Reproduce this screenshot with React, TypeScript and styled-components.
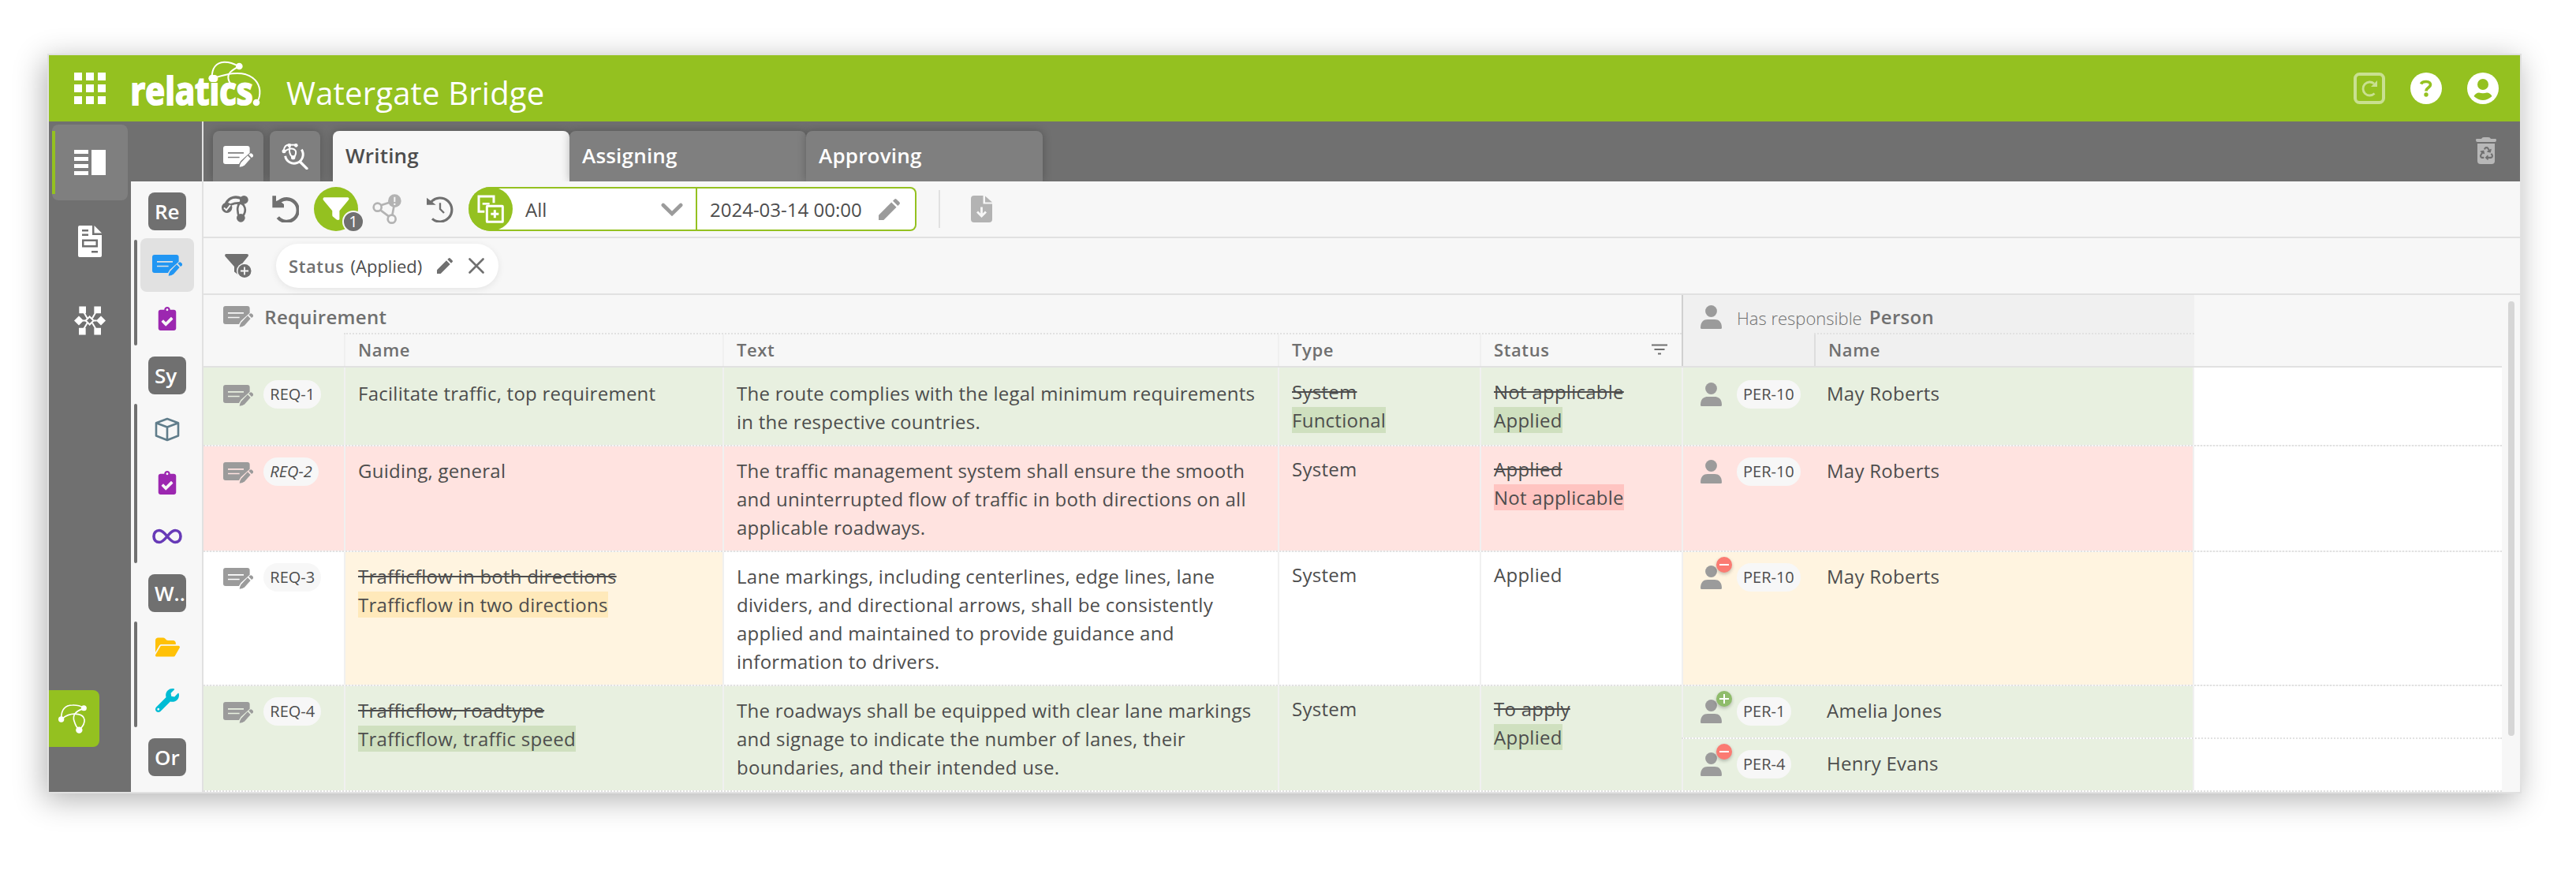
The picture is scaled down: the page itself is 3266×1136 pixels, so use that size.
import React from "react";
import styled, { createGlobalStyle, css } from "styled-components";
import { FaClipboardCheck, FaWrench } from "react-icons/fa";
import { FaFolderOpen } from "react-icons/fa6";
import { FaRecycle } from "react-icons/fa";

const green = "#94c120";
const dark = "#707070";
const ink = "#4d4d4d";
const line = "#e1e1e1";
const soft = "#f7f7f7";

const GlobalStyle = createGlobalStyle`
  * { box-sizing: border-box; }
  body {
    margin: 0;
    background: #fff;
    color: ${ink};
    font-family: "Open Sans", "Noto Sans", sans-serif;
    font-size: 24px;
  }
  svg { display: block; flex: none; }
`;

const Page = styled.div`
  height: 1136px;
  padding: 68px 69px 130px 60px;
`;

const Window = styled.div`
  width: 3137px;
  height: 938px;
  border: 2px solid ${line};
  box-shadow: -4px 8px 36px rgba(0, 0, 0, 0.3);
  display: flex;
  flex-direction: column;
  background: ${soft};
`;

/* ---------- header ---------- */

const Header = styled.header`
  height: 84px;
  flex: none;
  background: ${green};
  display: flex;
  align-items: center;
  padding: 0 27px 0 32px;
  color: #fff;
`;

const Brand = styled.div`
  margin-left: 31px;
`;

const Title = styled.h1`
  margin: 0 auto 0 28px;
  padding-top: 12px;
  font-size: 40px;
  line-height: 56px;
  font-weight: 400;
  letter-spacing: 0.2px;
`;

const HeaderActions = styled.div`
  display: flex;
  gap: 32px;
`;

/* ---------- shell ---------- */

const Body = styled.div`
  flex: 1;
  min-height: 0;
  display: flex;
`;

const Rail = styled.nav`
  width: 104px;
  background: ${dark};
  display: flex;
  flex-direction: column;
  padding: 4px 0 57px 0;
`;

const RailItem = styled.div<{ $active?: boolean }>`
  width: 96px;
  height: 96px;
  margin: 0 0 4px 4px;
  border-radius: 8px;
  display: flex;
  align-items: center;
  color: #fff;
  background: ${(p) => (p.$active ? "#7f7f7f" : "transparent")};
`;

const RailMark = styled.div<{ $active?: boolean }>`
  width: 4px;
  height: 80px;
  margin-right: 24px;
  background: ${(p) => (p.$active ? green : "transparent")};
`;

const RailButton = styled.div`
  width: 64px;
  height: 72px;
  margin-top: auto;
  border-radius: 0 8px 8px 0;
  background: ${green};
  display: flex;
  align-items: center;
  padding-left: 12px;
`;

const SubRail = styled.nav`
  width: 90px;
  display: flex;
  flex-direction: column;
`;

const SubRailCap = styled.div`
  height: 76px;
  background: ${dark};
`;

const GroupChip = styled.div`
  width: 48px;
  height: 48px;
  margin: 14px 0 10px 22px;
  padding: 0 0 1px 8px;
  border-radius: 8px;
  background: ${dark};
  color: #fff;
  font-size: 26px;
  font-weight: 600;
  line-height: 48px;
  overflow: hidden;
  white-space: nowrap;
`;

const Group = styled.div`
  display: flex;
  padding-left: 4px;
`;

const GroupBar = styled.div`
  width: 4px;
  margin: 2px 4px 0 0;
  border-radius: 2px;
  background: ${dark};
`;

const GroupItem = styled.div<{ $color: string; $active?: boolean }>`
  width: 68px;
  height: 68px;
  border-radius: 8px;
  display: flex;
  align-items: center;
  justify-content: center;
  color: ${(p) => p.$color};
  background: ${(p) => (p.$active ? "#e1e1e1" : "transparent")};
`;

const Main = styled.main`
  flex: 1;
  min-width: 0;
  border-left: 2px solid ${line};
  display: flex;
  flex-direction: column;
`;

/* ---------- tabs ---------- */

const TabBar = styled.div`
  height: 76px;
  background: ${dark};
  display: flex;
  align-items: flex-end;
  padding: 0 30px 0 12px;
  overflow: hidden;
`;

const tabBase = css`
  height: 64px;
  border-radius: 8px 8px 0 0;
  display: flex;
  align-items: center;
  box-shadow: 0 0 12px rgba(0, 0, 0, 0.25);
  color: #fff;
  background: #7f7f7f;
`;

const IconTab = styled.div`
  ${tabBase}
  width: 64px;
  margin-right: 8px;
  justify-content: center;
`;

const Tab = styled.div<{ $active?: boolean }>`
  ${tabBase}
  width: 300px;
  padding: 0 16px 3px;
  font-size: 26px;
  font-weight: 600;
  letter-spacing: 0.2px;
  ${(p) =>
    p.$active &&
    css`
      margin-left: 8px;
      color: ${ink};
      background: ${soft};
    `}
`;

const TabTrash = styled.div`
  margin-left: auto;
  height: 56px;
  color: #b7b7b7;
`;

/* ---------- toolbars ---------- */

const Toolbar = styled.div`
  height: 72px;
  flex: none;
  border-bottom: 2px solid ${line};
  display: flex;
  align-items: center;
  padding-left: 8px;
  color: ${dark};
`;

const Tool = styled.div<{ $muted?: boolean; $shift?: number }>`
  width: 64px;
  height: 56px;
  margin-left: ${(p) => p.$shift ?? 0}px;
  display: flex;
  align-items: center;
  justify-content: center;
  color: ${(p) => (p.$muted ? "#b3b3b3" : dark)};
`;

const RoundTool = styled.div<{ $left?: number }>`
  position: relative;
  width: 56px;
  height: 56px;
  margin-left: ${(p) => p.$left ?? 0}px;
  flex: none;
  border-radius: 50%;
  background: ${green};
  color: #fff;
  display: flex;
  align-items: center;
  justify-content: center;
`;

const CountBadge = styled.span`
  position: absolute;
  right: -8px;
  bottom: -2px;
  width: 28px;
  height: 28px;
  border-radius: 50%;
  border: 2px solid ${soft};
  background: ${dark};
  color: #fff;
  font-size: 20px;
  line-height: 24px;
  text-align: center;
`;

const Combo = styled.div`
  width: 568px;
  height: 56px;
  margin-left: 4px;
  display: flex;
  border: 2px solid ${green};
  border-left: 0;
  border-radius: 28px 8px 8px 28px;
  background: #fff;
  color: ${ink};
  align-items: center;
`;

const ComboSelect = styled.div`
  flex: 1;
  display: flex;
  align-items: center;
  justify-content: space-between;
  padding: 0 16px 0 16px;
`;

const ComboDate = styled.div`
  width: 278px;
  height: 52px;
  border-left: 2px solid ${green};
  display: flex;
  align-items: center;
  justify-content: space-between;
  padding: 0 19px 0 16px;
`;

const Gray = styled.span`
  color: #9b9b9b;
`;

const Divider = styled.div`
  width: 2px;
  height: 48px;
  margin: 0 20px 0 28px;
  background: ${line};
`;

const FilterChip = styled.div`
  width: 282px;
  height: 56px;
  margin-left: 16px;
  padding: 0 18px 0 16px;
  border-radius: 28px;
  background: #fff;
  box-shadow: 0 2px 10px rgba(0, 0, 0, 0.08);
  display: flex;
  align-items: center;
  font-size: 22px;
  color: ${dark};
`;

const ChipField = styled.b`
  font-weight: 600;
  letter-spacing: 0.6px;
  margin-right: 8px;
`;

const ChipValue = styled.span`
  color: ${ink};
  margin-right: auto;
`;

const ChipActions = styled.span`
  display: flex;
  gap: 20px;
`;

/* ---------- table ---------- */

const TableArea = styled.div`
  flex: 1;
  min-height: 0;
  display: flex;
`;

const Table = styled.div`
  width: 2914px;
  display: flex;
  flex-direction: column;
`;

const HeadRow = styled.div`
  height: 92px;
  flex: none;
  display: flex;
  border-bottom: 2px solid ${line};
  color: ${dark};
  font-weight: 600;
`;

const HeadGroup = styled.div<{ $width: number; $alt?: boolean }>`
  width: ${(p) => p.$width}px;
  display: flex;
  flex-direction: column;
  ${(p) =>
    p.$alt &&
    css`
      background: #f0f0f0;
      border-left: 2px solid #d0d0d0;
    `}
`;

const HeadTitle = styled.div<{ $gap: number; $left: number }>`
  height: 48px;
  display: flex;
  align-items: center;
  gap: ${(p) => p.$gap}px;
  padding-left: ${(p) => p.$left}px;
  font-size: 24px;
  letter-spacing: 0.3px;
  padding-top: 7px;
`;

const HeadLight = styled.span`
  font-size: 22px;
  font-weight: 300;
  letter-spacing: 0;
  margin-right: -10px;
  padding-top: 2px;
`;

const HeadCells = styled.div<{ $indent: number }>`
  height: 42px;
  display: flex;
  margin-left: ${(p) => p.$indent}px;
  border-top: 2px dotted ${line};
`;

const HeadCell = styled.div<{ $width: number; $alt?: boolean }>`
  width: ${(p) => p.$width}px;
  border-left: 2px solid ${(p) => (p.$alt ? "#dddddd" : "#f0f0f0")};
  padding: 0 18px 2px 16px;
  display: flex;
  align-items: center;
  justify-content: space-between;
  font-size: 22px;
  letter-spacing: 0.6px;
`;

type Tone = "add" | "remove" | "change" | "none";

const toneBg: Record<Tone, string> = {
  add: "#e8f0e0",
  remove: "#ffe3e0",
  change: "#fff4e0",
  none: "#ffffff",
};
const toneMark: Record<Tone, string> = {
  add: "#cfe0bf",
  remove: "#ffc4c1",
  change: "#ffe9ba",
  none: "transparent",
};

const Row = styled.div<{ $first?: boolean }>`
  display: flex;
  background: #fff;
  ${(p) =>
    p.$first
      ? css`
          --top: 2px;
        `
      : css`
          border-top: 2px dotted ${line};
          background-clip: padding-box;
        `}
`;

const Cell = styled.div<{ $width: number; $tone: Tone; $up?: boolean; $first?: boolean }>`
  width: ${(p) => p.$width}px;
  flex: none;
  padding: calc(${(p) => (p.$up ? 11 : 13)}px + var(--top, 0px)) 0 ${(p) => (p.$up ? 13 : 11)}px 16px;
  border-left: ${(p) => (p.$first ? 0 : 2)}px solid #f0f0f0;
  background: ${(p) => toneBg[p.$tone]};
  line-height: 36px;
  letter-spacing: 0.26px;
  white-space: pre-line;
`;

const KeyCell = styled.div<{ $width: number; $tone: Tone; $left: number; $gap: number; $line?: boolean }>`
  width: ${(p) => p.$width}px;
  flex: none;
  display: flex;
  align-items: flex-start;
  gap: ${(p) => p.$gap}px;
  padding: calc(14px + var(--top, 0px)) 0 0 ${(p) => p.$left}px;
  border-left: ${(p) => (p.$line ? 2 : 0)}px solid #f0f0f0;
  background: ${(p) => toneBg[p.$tone]};
`;

const KeyIcon = styled.div<{ $top: number }>`
  position: relative;
  padding-top: ${(p) => p.$top}px;
  color: #9b9b9b;
`;

const ChangeBadge = styled.span<{ $kind: "add" | "remove" }>`
  position: absolute;
  left: 20px;
  top: -8px;
  width: 20px;
  height: 20px;
  border-radius: 50%;
  background: ${(p) => (p.$kind === "add" ? "#8fbc6b" : "#fb7b72")};
  box-shadow: 0 2px 4px rgba(0, 0, 0, 0.25);
  display: flex;
  align-items: center;
  justify-content: center;
`;

const Pill = styled.span<{ $italic?: boolean }>`
  height: 36px;
  padding: 0 8px;
  border-radius: 18px;
  background: ${soft};
  font-size: 20px;
  line-height: 35px;
  font-style: ${(p) => (p.$italic ? "italic" : "normal")};
`;

const Old = styled.s`
  text-decoration-thickness: 2px;
`;

const Mark = styled.span<{ $tone: Tone }>`
  background: ${(p) => toneMark[p.$tone]};
`;

const People = styled.div`
  flex: 1;
  display: flex;
  flex-direction: column;
`;

const PersonRow = styled.div`
  flex: 1;
  display: flex;
  & + & {
    border-top: 2px dotted ${line};
  }
`;

const Filler = styled.div`
  flex: 1;
  border-left: 2px solid #f0f0f0;
`;

const LastLine = styled.div`
  height: 2px;
  background: #fff;
  border-top: 2px dotted ${line};
`;

const ScrollTrack = styled.div`
  flex: 1;
  padding: 8px 0 0 8px;
`;

const ScrollThumb = styled.div`
  width: 8px;
  height: 551px;
  border-radius: 4px;
  background: #d6d6d6;
`;

/* ---------- drawings ---------- */

const LogoSvg = styled.svg`
  overflow: visible;
`;

const NoteIcon = () => (
  <svg width="38.3" height="27" viewBox="0 0 115 81" fill="currentColor">
    <path
      fillRule="evenodd"
      d="M9 0H92a9 9 0 0 1 9 9V26L67 57L60 69H9a9 9 0 0 1-9-9V9a9 9 0 0 1 9-9ZM18 24v5H78v-5ZM18 41v5H62v-5Z"
    />
    <path d="M93 37L104 48L82 73Q75 80 62 80Q63 71 68 63Z" />
    <path d="M97 33l5-4q4-3 8 1l3 3q3 4 0 8l-5 4Z" />
  </svg>
);

const PersonIcon = () => (
  <svg width="27" height="30" viewBox="0 0 27 30" fill="currentColor">
    <circle cx="13.5" cy="7.5" r="7.4" />
    <path d="M0 28.5C0 21 4 18 9 18h9c5 0 9 3 9 10.500q0 1.500-1.500 1.500H1.500Q0 30 0 28.500Z" />
  </svg>
);

const PencilIcon = ({ size }: { size: number }) => (
  <svg width={size} height={size} viewBox="0 0 60 60" fill="currentColor">
    <path d="M0 60V46L36 10L50 24L14 60Z" />
    <path d="M40 6L45 1q3-2 6 1l7 7q3 3 1 6l-5 5Z" />
  </svg>
);

const Logo = () => (
  <LogoSvg width="170" height="84" viewBox="45 12 510 252" fill="none" stroke="#fff">
    <text
      x="46"
      y="201"
      fill="#fff"
      strokeWidth="6"
      fontFamily="Open Sans, sans-serif"
      fontWeight="700"
      fontSize="144"
      textLength="466"
      lengthAdjust="spacingAndGlyphs"
    >
      relatics
    </text>
    <g strokeWidth="6">
      <path d="M356 96C356 62 372 40 402 38C425 37 440 44 458 54" />
      <path d="M360 99C410 86 445 74 485 85C525 98 540 128 538 158C537 175 532 185 526 192" />
      <path d="M458 56C435 66 417 78 418 97C418 108 424 118 432 128" />
    </g>
    <g fill="#fff" stroke="none">
      <circle cx="357" cy="100" r="14" />
      <circle cx="460" cy="54" r="13" />
      <circle cx="525" cy="192" r="13" />
    </g>
  </LogoSvg>
);

const MarkIcon = () => (
  <svg width="36" height="38" viewBox="104 752 108 114" fill="none" stroke="#fff" strokeWidth="5">
    <path d="M115 808C115 775 130 758 158 758C180 757 190 762 200 768" />
    <path d="M118 810C140 792 165 790 180 793C205 798 215 822 184 852" />
    <path d="M198 772C165 782 158 800 164 818C168 832 172 842 182 850" />
    <g fill="#fff" stroke="none">
      <circle cx="115" cy="812" r="11" />
      <circle cx="201" cy="769" r="10.500" />
      <circle cx="183" cy="853" r="12.500" />
    </g>
  </svg>
);

const AppsIcon = () => (
  <svg width="40" height="40" viewBox="0 0 40 40" fill="currentColor">
    {[0, 15, 30].map((y) => [0, 15, 30].map((x) => <rect key={`${x}-${y}`} x={x} y={y} width="10" height="10" />))}
  </svg>
);

const ReloadIcon = () => (
  <svg width="40" height="40" viewBox="0 0 40 40" fill="none" stroke="#fff" opacity="0.5">
    <rect x="2" y="2" width="36" height="36" rx="5.500" strokeWidth="4" />
    <path d="M26 14A8.500 8.500 0 1 0 26.500 26.500" strokeWidth="2.800" />
    <path d="M30 10v8h-8z" fill="#fff" stroke="none" />
  </svg>
);

const HelpIcon = () => (
  <svg width="40" height="40" viewBox="0 0 40 40" fill="none">
    <circle cx="20" cy="20" r="20" fill="#fff" />
    <path d="M13.500 14.500C15 11 18 11.500 20.500 11.500C24 11.500 25.500 13.500 25.500 15.500C25.500 19 20 19 20 23.500" stroke={green} strokeWidth="3.600" />
    <circle cx="20" cy="28" r="2.700" fill={green} />
  </svg>
);

const UserIcon = () => (
  <svg width="40" height="40" viewBox="0 0 40 40">
    <circle cx="20" cy="20" r="20" fill="#fff" />
    <circle cx="20" cy="15" r="7" fill={green} />
    <path d="M8.500 30Q11 25.500 15 25.500Q20 27 25 25.500Q29 25.500 31.500 30Q26 35 20 35Q14 35 8.500 30Z" fill={green} />
  </svg>
);

const PanelIcon = () => (
  <svg width="40" height="32" viewBox="0 0 40 32" fill="currentColor">
    {[0, 9, 18, 27].map((y) => (
      <rect key={y} y={y} width="18" height="5" />
    ))}
    <rect x="22" width="18" height="32" />
  </svg>
);

const ReportIcon = () => (
  <svg width="40" height="40" viewBox="-5 0 40 40" fill="currentColor">
    <path
      fillRule="evenodd"
      d="M2 0H18V12H30V38a2 2 0 0 1-2 2H2a2 2 0 0 1-2-2V2a2 2 0 0 1 2-2ZM5 5v2.500h8V5ZM5 10.500v2.500h8v-2.500ZM5 17.500v10H25v-10ZM17 32v2.500h8V32Z"
    />
    <path d="M20.500 0L30 9.500H20.500Z" />
    <rect x="7.500" y="20" width="15" height="5" />
  </svg>
);

const NetworkIcon = () => (
  <svg width="40" height="37" viewBox="162 173 120 110" fill="currentColor">
    <path d="M181 174h26v26h-26zM238 174h26v26h-26zM180 256h26v26h-26zM238 256h26v26h-26zM162 228l18-18 18 18-18 18zM246 228l18-18 18 18-18 18z" />
    <path
      d="M198 195L212 219M245 195L231 219M198 260L212 237M245 260L231 237M194 228H207M235 228H248"
      stroke="currentColor"
      strokeWidth="6"
    />
    <path d="M221 213L236 228L221 243L206 228Z" fill="none" stroke="currentColor" strokeWidth="6" />
  </svg>
);

const CubeIcon = () => (
  <svg width="32" height="31" viewBox="0 0 32 31" fill="none" stroke="currentColor" strokeWidth="2.600" strokeLinejoin="round">
    <path d="M16 2L30 7.200V23.500L16 29L2 23.500V7.200ZM2 7.200L16 12.500L30 7.200M16 12.500V29" />
  </svg>
);

const InfinityIcon = () => (
  <svg width="38" height="20" viewBox="0 0 38 20" fill="none" stroke="currentColor" strokeWidth="3.600">
    <path d="M19 10C15 5 12.500 2.500 9 2.500C4.800 2.500 2 5.500 2 10S4.800 17.500 9 17.500C12.500 17.500 15 15 19 10S25.500 2.500 29 2.500C33.200 2.500 36 5.500 36 10S33.200 17.500 29 17.500C25.500 17.500 23 15 19 10Z" />
  </svg>
);

const SearchRelationIcon = () => (
  <svg width="34" height="34" viewBox="292 62 102 102" fill="none" stroke="currentColor">
    <path d="M368 88A34 34 0 1 1 306 112" strokeWidth="9" />
    <path d="M362 134L388 160" strokeWidth="10" strokeLinecap="round" />
    <path d="M300 92C302 76 310 68 326 70M304 94C320 82 340 80 346 94C348 105 344 112 338 120M324 74C320 90 322 108 334 118" strokeWidth="6" />
    <g fill="currentColor" stroke="none">
      <circle cx="301" cy="94" r="7.500" />
      <circle cx="321" cy="72" r="7" />
      <circle cx="347" cy="72" r="7" />
      <circle cx="336" cy="118" r="8" />
    </g>
    <path d="M321 70H347" strokeWidth="6" />
  </svg>
);

const RelationCheckIcon = () => (
  <svg width="34" height="36" viewBox="64 262 102 108" fill="none" stroke="currentColor">
    <path d="M80 296C92 270 118 266 140 276" strokeWidth="10" />
    <path d="M96 300C118 292 140 290 148 302C158 318 152 336 138 350M142 286C122 296 120 322 132 350" strokeWidth="8" />
    <g fill="currentColor" stroke="none">
      <circle cx="84" cy="311" r="20" />
      <circle cx="149" cy="281" r="16" />
      <circle cx="137" cy="350" r="16" />
    </g>
    <path d="M73 311L82 320L97 301" stroke={soft} strokeWidth="6" />
  </svg>
);

const UndoIcon = () => (
  <svg width="34" height="34" viewBox="255 263 102 102" fill="none" stroke="currentColor">
    <path d="M280 288A43 43 0 1 1 277 346" strokeWidth="13" />
    <path d="M256 264H270V284L280 280L300 296V309H256Z" fill="currentColor" stroke="none" />
  </svg>
);

const FunnelIcon = () => (
  <svg width="34" height="30" viewBox="447 269 103 92" fill="currentColor">
    <path d="M452 270H545Q552 273 547 280L512 322V355Q508 361 500 356L487 345Q484 343 484 338V322L449 280Q446 273 452 270Z" />
  </svg>
);

const ShareIcon = () => (
  <svg width="37" height="39" viewBox="635 257 111 117" fill="none" stroke="currentColor" strokeWidth="8">
    <circle cx="655" cy="307" r="15" />
    <circle cx="709" cy="352" r="15" />
    <path d="M668 300L700 289M666 318L698 342M711 338L717 305" />
    <circle cx="720" cy="283" r="25" fill="currentColor" stroke="none" />
    <path d="M720 268V287M720 292V299" stroke={soft} strokeWidth="6" />
  </svg>
);

const HistoryIcon = () => (
  <svg width="34" height="34" viewBox="513 84 102 102" fill="none" stroke="currentColor" strokeWidth="9.500">
    <path d="M530 108A45 45 0 1 1 534 172" />
    <path d="M513 92L548 119H513Z" fill="currentColor" stroke="none" />
    <path d="M564 112V135L579 150" strokeWidth="7" />
  </svg>
);

const CompareIcon = () => (
  <svg width="34" height="36" viewBox="705 81 102 108" fill="none" stroke="#fff" strokeWidth="9">
    <path d="M733 145H711V87H768V112" />
    <path d="M725 115H752" strokeWidth="8" />
    <rect x="742" y="124" width="60" height="60" rx="2" />
    <path d="M772 139V169M757 154H787" strokeWidth="9" />
  </svg>
);

const ChevronIcon = () => (
  <svg width="28" height="17" viewBox="0 0 28 17" fill="none" stroke="currentColor" strokeWidth="4.600" strokeLinecap="round">
    <path d="M2.800 3L14 14L25.200 3" />
  </svg>
);

const DownloadIcon = () => (
  <svg width="27" height="34" viewBox="0 0 27 34" fill="currentColor">
    <path d="M4 0H15.500V10.500H27V30a4 4 0 0 1-4 4H4a4 4 0 0 1-4-4V4a4 4 0 0 1 4-4Z" />
    <path d="M18 0.500L27 8.500H18Z" />
    <path d="M13.500 14.500V26M8 20.500L13.500 26L19 20.500" fill="none" stroke={soft} strokeWidth="2.800" />
  </svg>
);

const AddFilterIcon = () => (
  <svg width="34" height="30" viewBox="0 0 34 30">
    <path d="M1.500 0H28Q31 .5 29.500 3L19 16V28L12 22.500V16L.5 3Q-.5.5 1.500 0Z" fill="currentColor" />
    <circle cx="25" cy="21.500" r="10" fill={soft} />
    <circle cx="25" cy="21.500" r="8.500" fill="currentColor" />
    <path d="M25 16.500V26.500M20 21.500H30" stroke={soft} strokeWidth="1.800" />
  </svg>
);

const CloseIcon = () => (
  <svg width="20" height="20" viewBox="0 0 20 20" fill="none" stroke="currentColor" strokeWidth="2.600" strokeLinecap="round">
    <path d="M1.500 1.500L18.500 18.500M18.500 1.500L1.500 18.500" />
  </svg>
);

const SortIcon = () => (
  <svg width="20" height="14" viewBox="0 0 20 14" stroke="currentColor" strokeWidth="2.200">
    <path d="M0 1.500H20M3.500 7H16.500M8 12.500H12" />
  </svg>
);

const TrashBox = styled.div`
  display: flex;
  flex-direction: column;
  align-items: center;
  gap: 1.5px;
`;

const TrashBin = styled.div`
  width: 22px;
  height: 26px;
  border-radius: 0 0 4px 4px;
  background: currentColor;
  display: flex;
  align-items: center;
  justify-content: center;
  svg {
    color: ${dark};
  }
`;

const Trash = () => (
  <TrashBox>
    <svg width="26" height="6" viewBox="0 0 26 6" fill="currentColor">
      <path d="M1 2H7Q8 0 10 0H16Q18 0 19 2H25Q26 2 26 3.500Q26 6 24 6H2Q0 6 0 3.500Q0 2 1 2Z" />
    </svg>
    <TrashBin>
      <FaRecycle size={17} />
    </TrashBin>
  </TrashBox>
);

const Sign = ({ kind }: { kind: "add" | "remove" }) => (
  <svg width="12" height="12" viewBox="0 0 12 12" stroke="#fff" strokeWidth="2">
    <path d={kind === "add" ? "M0 6H12M6 0V12" : "M0 6H12"} />
  </svg>
);

/* ---------- data ---------- */

type Value = { old?: string; text: string; tone?: Tone };
type Person = { id: string; name: string; change?: "add" | "remove"; tone: Tone };
type Requirement = {
  id: string;
  tone: Tone;
  italic?: boolean;
  name: Value;
  text: string;
  type: Value;
  status: Value;
  people: Person[];
};

const requirements: Requirement[] = [
  {
    id: "REQ-1",
    tone: "add",
    name: { text: "Facilitate traffic, top requirement" },
    text: "The route complies with the legal minimum requirements\nin the respective countries.",
    type: { old: "System", text: "Functional" },
    status: { old: "Not applicable", text: "Applied" },
    people: [{ id: "PER-10", name: "May Roberts", tone: "add" }],
  },
  {
    id: "REQ-2",
    tone: "remove",
    italic: true,
    name: { text: "Guiding, general" },
    text: "The traffic management system shall ensure the smooth\nand uninterrupted flow of traffic in both directions on all\napplicable roadways.",
    type: { text: "System" },
    status: { old: "Applied", text: "Not applicable" },
    people: [{ id: "PER-10", name: "May Roberts", tone: "remove" }],
  },
  {
    id: "REQ-3",
    tone: "none",
    name: { old: "Trafficflow in both directions", text: "Trafficflow in two directions", tone: "change" },
    text: "Lane markings, including centerlines, edge lines, lane\ndividers, and directional arrows, shall be consistently\napplied and maintained to provide guidance and\ninformation to drivers.",
    type: { text: "System" },
    status: { text: "Applied" },
    people: [{ id: "PER-10", name: "May Roberts", change: "remove", tone: "change" }],
  },
  {
    id: "REQ-4",
    tone: "add",
    name: { old: "Trafficflow, roadtype", text: "Trafficflow, traffic speed" },
    text: "The roadways shall be equipped with clear lane markings\nand signage to indicate the number of lanes, their\nboundaries, and their intended use.",
    type: { text: "System" },
    status: { old: "To apply", text: "Applied" },
    people: [
      { id: "PER-1", name: "Amelia Jones", change: "add", tone: "add" },
      { id: "PER-4", name: "Henry Evans", change: "remove", tone: "add" },
    ],
  },
];

const ValueCell = ({ value, tone, width, up }: { value: Value; tone: Tone; width: number; up?: boolean }) => {
  const own = value.tone ?? tone;
  return (
    <Cell $width={width} $tone={own} $up={up}>
      {value.old ? (
        <>
          <Old>{value.old}</Old>
          <br />
          <Mark $tone={own}>{value.text}</Mark>
        </>
      ) : (
        value.text
      )}
    </Cell>
  );
};

const RequirementRow = ({ item, first }: { item: Requirement; first: boolean }) => (
  <Row $first={first}>
    <KeyCell $width={178} $tone={item.tone} $left={25} $gap={13}>
      <KeyIcon $top={6}>
        <NoteIcon />
      </KeyIcon>
      <Pill $italic={item.italic}>{item.id}</Pill>
    </KeyCell>
    <ValueCell value={item.name} tone={item.tone} width={480} />
    <Cell $width={704} $tone={item.tone}>
      {item.text}
    </Cell>
    <ValueCell value={item.type} tone={item.tone} width={256} up />
    <ValueCell value={item.status} tone={item.tone} width={256} up />
    <People>
      {item.people.map((p) => (
        <PersonRow key={p.id}>
          <KeyCell $width={168} $tone={p.tone} $left={22} $gap={19} $line>
            <KeyIcon $top={3}>
              <PersonIcon />
              {p.change && (
                <ChangeBadge $kind={p.change}>
                  <Sign kind={p.change} />
                </ChangeBadge>
              )}
            </KeyIcon>
            <Pill>{p.id}</Pill>
          </KeyCell>
          <Cell $width={480} $tone={p.tone} $first>
            {p.name}
          </Cell>
          <Filler />
        </PersonRow>
      ))}
    </People>
  </Row>
);

export default function App() {
  return (
    <Page>
      <GlobalStyle />
      <Window>
        <Header>
          <AppsIcon />
          <Brand>
            <Logo />
          </Brand>
          <Title>Watergate Bridge</Title>
          <HeaderActions>
            <ReloadIcon />
            <HelpIcon />
            <UserIcon />
          </HeaderActions>
        </Header>
        <Body>
          <Rail>
            <RailItem $active>
              <RailMark $active />
              <PanelIcon />
            </RailItem>
            <RailItem>
              <RailMark />
              <ReportIcon />
            </RailItem>
            <RailItem>
              <RailMark />
              <NetworkIcon />
            </RailItem>
            <RailButton>
              <MarkIcon />
            </RailButton>
          </Rail>
          <SubRail>
            <SubRailCap />
            <GroupChip>Re</GroupChip>
            <Group>
              <GroupBar />
              <div>
                <GroupItem $active $color="#2196f3">
                  <NoteIcon />
                </GroupItem>
                <GroupItem $color="#9c27b0">
                  <FaClipboardCheck size={30} />
                </GroupItem>
              </div>
            </Group>
            <GroupChip>Sy</GroupChip>
            <Group>
              <GroupBar />
              <div>
                <GroupItem $color="#607d8b">
                  <CubeIcon />
                </GroupItem>
                <GroupItem $color="#9c27b0">
                  <FaClipboardCheck size={30} />
                </GroupItem>
                <GroupItem $color="#673ab7">
                  <InfinityIcon />
                </GroupItem>
              </div>
            </Group>
            <GroupChip>W..</GroupChip>
            <Group>
              <GroupBar />
              <div>
                <GroupItem $color="#ffc107">
                  <FaFolderOpen size={31} />
                </GroupItem>
                <GroupItem $color="#00bcd4">
                  <FaWrench size={30} />
                </GroupItem>
              </div>
            </Group>
            <GroupChip>Or</GroupChip>
          </SubRail>
          <Main>
            <TabBar>
              <IconTab>
                <NoteIcon />
              </IconTab>
              <IconTab>
                <SearchRelationIcon />
              </IconTab>
              <Tab $active>Writing</Tab>
              <Tab>Assigning</Tab>
              <Tab>Approving</Tab>
              <TabTrash>
                <Trash />
              </TabTrash>
            </TabBar>
            <Toolbar>
              <Tool>
                <RelationCheckIcon />
              </Tool>
              <Tool>
                <UndoIcon />
              </Tool>
              <Tool>
                <RoundTool>
                  <FunnelIcon />
                  <CountBadge>1</CountBadge>
                </RoundTool>
              </Tool>
              <Tool $muted>
                <ShareIcon />
              </Tool>
              <Tool $shift={4}>
                <HistoryIcon />
              </Tool>
              <Combo>
                <RoundTool>
                  <CompareIcon />
                </RoundTool>
                <ComboSelect>
                  All
                  <Gray>
                    <ChevronIcon />
                  </Gray>
                </ComboSelect>
                <ComboDate>
                  2024-03-14 00:00
                  <Gray>
                    <PencilIcon size={27} />
                  </Gray>
                </ComboDate>
              </Combo>
              <Divider />
              <Tool $muted>
                <DownloadIcon />
              </Tool>
            </Toolbar>
            <Toolbar>
              <Tool $shift={4}>
                <AddFilterIcon />
              </Tool>
              <FilterChip>
                <ChipField>Status</ChipField>
                <ChipValue>(Applied)</ChipValue>
                <ChipActions>
                  <PencilIcon size={20} />
                  <CloseIcon />
                </ChipActions>
              </FilterChip>
            </Toolbar>
            <TableArea>
              <Table>
                <HeadRow>
                  <HeadGroup $width={1874}>
                    <HeadTitle $gap={14} $left={25}>
                      <Gray>
                        <NoteIcon />
                      </Gray>
                      Requirement
                    </HeadTitle>
                    <HeadCells $indent={178}>
                      <HeadCell $width={480}>Name</HeadCell>
                      <HeadCell $width={704}>Text</HeadCell>
                      <HeadCell $width={256}>Type</HeadCell>
                      <HeadCell $width={256}>
                        Status
                        <SortIcon />
                      </HeadCell>
                    </HeadCells>
                  </HeadGroup>
                  <HeadGroup $width={650} $alt>
                    <HeadTitle $gap={19} $left={22}>
                      <Gray>
                        <PersonIcon />
                      </Gray>
                      <HeadLight>Has responsible</HeadLight>
                      Person
                    </HeadTitle>
                    <HeadCells $indent={166}>
                      <HeadCell $width={480} $alt>
                        Name
                      </HeadCell>
                    </HeadCells>
                  </HeadGroup>
                </HeadRow>
                {requirements.map((r, i) => (
                  <RequirementRow key={r.id} item={r} first={i === 0} />
                ))}
                <LastLine />
              </Table>
              <ScrollTrack>
                <ScrollThumb />
              </ScrollTrack>
            </TableArea>
          </Main>
        </Body>
      </Window>
    </Page>
  );
}
